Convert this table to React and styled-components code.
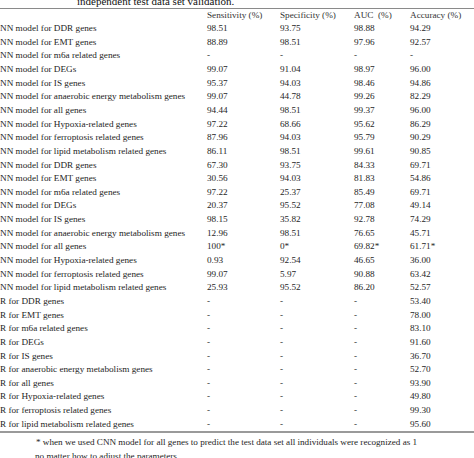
import React from "react";
import styled, { createGlobalStyle } from "styled-components";

const GlobalStyle = createGlobalStyle`
  html, body {
    margin: 0;
    padding: 0;
    background: #ffffff;
  }
  body {
    width: 474px;
    height: 458px;
    overflow: hidden;
    font-family: "Liberation Serif", "Times New Roman", serif;
    color: #1e1e1e;
  }
`;

const Page = styled.div`
  width: 474px;
  height: 458px;
  overflow: hidden;
  display: flex;
  flex-direction: column;
`;

const Caption = styled.div`
  font-size: 11px;
  line-height: 12px;
  margin-top: -5px;
  padding-left: 77px;
  color: #111;
  white-space: nowrap;
`;

const Table = styled.div`
  margin-top: 0.5px;
  border-top: 1.5px solid #8a8a8a;
  border-bottom: 2px solid #9a9a9a;
  display: flex;
  flex-direction: column;
`;

const Row = styled.div`
  display: grid;
  grid-template-columns: 207px 73px 74px 56px 1fr;
  height: 13.65px;
  align-items: center;
  font-size: 9.2px;
  line-height: 13.65px;
  white-space: nowrap;
  color: ${(p) => (p.$head ? "#333" : "#1e1e1e")};
`;

const Cell = styled.div`
  overflow: visible;
`;

const Notes = styled.div`
  padding-top: 3px;
  display: flex;
  flex-direction: column;
`;

const Note = styled.div`
  font-size: 9.15px;
  line-height: 13.6px;
  padding-left: ${(p) => p.$indent}px;
  white-space: nowrap;
  color: #1e1e1e;
`;

const rows = [
  ["NN model for DDR genes", "98.51", "93.75", "98.88", "94.29"],
  ["NN model for EMT genes", "88.89", "98.51", "97.96", "92.57"],
  ["NN model for m6a related genes", "-", "-", "-", "-"],
  ["NN model for DEGs", "99.07", "91.04", "98.97", "96.00"],
  ["NN model for IS genes", "95.37", "94.03", "98.46", "94.86"],
  ["NN model for anaerobic energy metabolism genes", "99.07", "44.78", "99.26", "82.29"],
  ["NN model for all genes", "94.44", "98.51", "99.37", "96.00"],
  ["NN model for Hypoxia-related genes", "97.22", "68.66", "95.62", "86.29"],
  ["NN model for ferroptosis related genes", "87.96", "94.03", "95.79", "90.29"],
  ["NN model for lipid metabolism related genes", "86.11", "98.51", "99.61", "90.85"],
  ["NN model for DDR genes", "67.30", "93.75", "84.33", "69.71"],
  ["NN model for EMT genes", "30.56", "94.03", "81.83", "54.86"],
  ["NN model for m6a related genes", "97.22", "25.37", "85.49", "69.71"],
  ["NN model for DEGs", "20.37", "95.52", "77.08", "49.14"],
  ["NN model for IS genes", "98.15", "35.82", "92.78", "74.29"],
  ["NN model for anaerobic energy metabolism genes", "12.96", "98.51", "76.65", "45.71"],
  ["NN model for all genes", "100*", "0*", "69.82*", "61.71*"],
  ["NN model for Hypoxia-related genes", "0.93", "92.54", "46.65", "36.00"],
  ["NN model for ferroptosis related genes", "99.07", "5.97", "90.88", "63.42"],
  ["NN model for lipid metabolism related genes", "25.93", "95.52", "86.20", "52.57"],
  ["R for DDR genes", "-", "-", "-", "53.40"],
  ["R for EMT genes", "-", "-", "-", "78.00"],
  ["R for m6a related genes", "-", "-", "-", "83.10"],
  ["R for DEGs", "-", "-", "-", "91.60"],
  ["R for IS genes", "-", "-", "-", "36.70"],
  ["R for anaerobic energy metabolism genes", "-", "-", "-", "52.70"],
  ["R for all genes", "-", "-", "-", "93.90"],
  ["R for Hypoxia-related genes", "-", "-", "-", "49.80"],
  ["R for ferroptosis related genes", "-", "-", "-", "99.30"],
  ["R for lipid metabolism related genes", "-", "-", "-", "95.60"],
];

const App = () => {
  return (
    <Page>
      <GlobalStyle />
      <Caption>independent test data set validation.</Caption>
      <Table>
        <Row $head>
          <Cell></Cell>
          <Cell>Sensitivity (%)</Cell>
          <Cell>Specificity (%)</Cell>
          <Cell>AUC&nbsp;&nbsp;(%)</Cell>
          <Cell>Accuracy (%)</Cell>
        </Row>
        {rows.map((r, i) => (
          <Row key={i}>
            {r.map((c, j) => (
              <Cell key={j}>{c}</Cell>
            ))}
          </Row>
        ))}
      </Table>
      <Notes>
        <Note $indent={36}>
          * when we used CNN model for all genes to predict the test data set all individuals were recognized as 1
        </Note>
        <Note $indent={35}>no matter how to adjust the parameters</Note>
      </Notes>
    </Page>
  );
};

export default App;
